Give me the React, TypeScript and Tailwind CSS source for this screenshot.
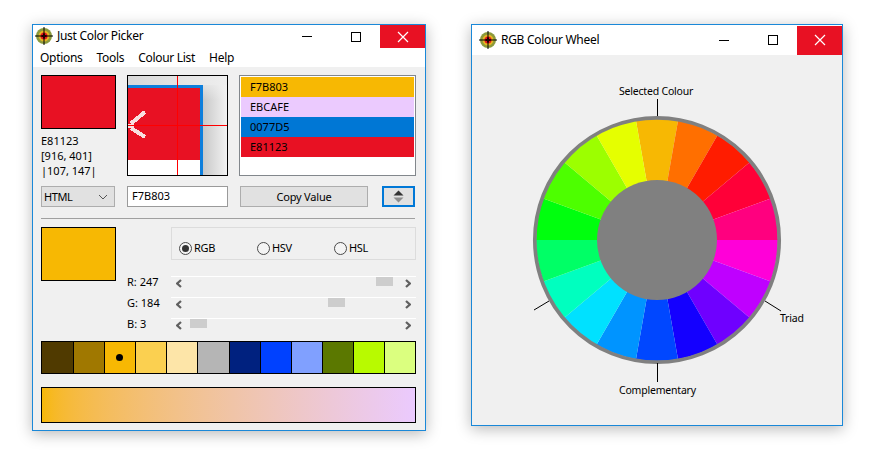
const swatches = ["#503A00", "#A07800", "#F7B803", "#FBD050", "#FDE5A8", "#B5B5B5", "#00217F", "#0041FF", "#80A0FF", "#5B7800", "#B8FA00", "#DBFF7F"];
const colourList = [
  { hex: "F7B803", bg: "bg-[#F7B803]" },
  { hex: "EBCAFE", bg: "bg-[#EBCAFE]" },
  { hex: "0077D5", bg: "bg-[#0077D5]" },
  { hex: "E81123", bg: "bg-[#E81123]" },
];
const sliders = [
  { label: "R: 247", thumb: 205 },
  { label: "G: 184", thumb: 157 },
  { label: "B: 3", thumb: 19 },
];
const wheel = ["#F7B803", "#FF6F00", "#FF1C00", "#FF0038", "#FF007F", "#FF00D8", "#BF00FF", "#6F00FF", "#1400FF", "#0047FF", "#0094FF", "#00E1FF", "#00FFBF", "#00FF66", "#00FF0E", "#4DFF00", "#9CFF00", "#E5FF00"];

function wedge(i: number) {
  const r = 121;
  const a = ((i * 20 - 10 - 90) * Math.PI) / 180;
  const b = ((i * 20 + 10 - 90) * Math.PI) / 180;
  return `M185 185L${185 + r * Math.cos(a)} ${185 + r * Math.sin(a)}A${r} ${r} 0 0 1 ${185 + r * Math.cos(b)} ${185 + r * Math.sin(b)}Z`;
}

function AppIcon() {
  return (
    <svg width="18" height="18" viewBox="0 0 18 18" className="shrink-0">
      <circle cx="9" cy="9" r="8" fill="#8B9A3C" />
      <circle cx="9" cy="9" r="5.5" fill="#E6B422" />
      <circle cx="9" cy="9" r="3.5" fill="#E4161E" />
      <path d="M0 9H18M9 0V18" stroke="#000" strokeWidth="1" />
      <path d="M6.5 9H11.5M9 6.5V11.5" stroke="#200" strokeWidth="2" />
    </svg>
  );
}

function WindowButtons({ height }: { height: string }) {
  return (
    <div className="flex items-center ml-auto">
      <span className="block w-[10px] h-px bg-black mr-[39px]" />
      <span className="block w-[10px] h-[10px] border border-black mr-[19px]" />
      <div className={`flex items-center justify-center w-[45px] bg-[#E81123] ${height}`}>
        <svg width="12" height="12" viewBox="0 0 12 12">
          <path d="M1 1L11 11M11 1L1 11" stroke="#fff" strokeWidth="1.2" />
        </svg>
      </div>
    </div>
  );
}

function ZoomView() {
  return (
    <svg width="99" height="99" viewBox="0 0 99 99" className="block">
      <defs>
        <linearGradient id="shade" x1="0" x2="1" y1="0" y2="0">
          <stop offset="0" stopColor="#C8C8C8" />
          <stop offset="1" stopColor="#F2F2F2" />
        </linearGradient>
        <linearGradient id="fade" x1="0" x2="0" y1="0" y2="1">
          <stop offset="0" stopColor="#F0F0F0" />
          <stop offset="1" stopColor="#F0F0F0" stopOpacity="0" />
        </linearGradient>
        <linearGradient id="strip" x1="0" x2="1" y1="0" y2="0">
          <stop offset="0" stopColor="#D8D8D8" />
          <stop offset="1" stopColor="#EEEEEE" />
        </linearGradient>
      </defs>
      <rect width="99" height="99" fill="#F0F0F0" />
      <rect x="75" width="24" height="99" fill="url(#shade)" />
      <rect x="75" width="24" height="24" fill="url(#fade)" />
      <rect width="99" height="9" fill="url(#strip)" />
      <rect y="9" width="75" height="90" fill="#0E7FDC" />
      <rect y="12" width="72" height="72" fill="#E81123" />
      <rect y="84" width="72" height="15" fill="#fff" />
      <path d="M17 36L3 47.5M3 52L17 61M0 49.5H6" stroke="#F8DFDF" strokeWidth="4" fill="none" shapeRendering="crispEdges" />
      <path d="M49.5 0V99M0 49.5H99" stroke="#FF0000" strokeWidth="1" />
    </svg>
  );
}

function Radio({ label, checked, width }: { label: string; checked?: boolean; width: string }) {
  return (
    <div className={`flex items-center gap-[2px] ${width}`}>
      <span className="flex items-center justify-center w-[13px] h-[13px] rounded-full border border-[#4a4a4a] bg-[#f4f4f4]">
        {checked && <span className="block w-[7px] h-[7px] rounded-full bg-[#333]" />}
      </span>
      <span className="tracking-[-0.3px]">{label}</span>
    </div>
  );
}

function Slider({ label, thumb }: { label: string; thumb: number }) {
  return (
    <div className="flex h-[21px]">
      <span className="w-[44px] h-[12px] leading-[12px]">{label}</span>
      <div className="relative flex justify-between items-start flex-1 border-t border-white pl-[5px] pr-[5px] pt-[1px]">
        <svg width="6" height="9" viewBox="0 0 6 9" className="mt-[1px]">
          <path d="M5 1L1.2 4.5L5 8" stroke="#606060" strokeWidth="2.2" fill="none" />
        </svg>
        <span className="absolute top-0 h-[9px] w-[17px] bg-[#CDCDCD]" style={{ left: thumb }} />
        <svg width="6" height="9" viewBox="0 0 6 9" className="mt-[1px]">
          <path d="M1 1L4.8 4.5L1 8" stroke="#606060" strokeWidth="2.2" fill="none" />
        </svg>
      </div>
    </div>
  );
}

function PickerWindow() {
  return (
    <div className="absolute left-[32px] top-[24px] w-[394px] h-[407px] flex flex-col border border-[#1A88D8] bg-[#F0F0F0] shadow-[0_3px_14px_rgba(0,0,0,0.28)]">
      <div className="flex items-center h-[23px] bg-white pl-[2px] tracking-[-0.3px]">
        <div className="flex items-center -mt-[2px]">
          <AppIcon />
          <span className="ml-[4px]">Just Color Picker</span>
        </div>
        <WindowButtons height="h-[23px]" />
      </div>
      <div className="flex items-center h-[19px] bg-white pl-[7px] gap-[14px] tracking-[-0.3px]">
        <span>Options</span>
        <span>Tools</span>
        <span>Colour List</span>
        <span>Help</span>
      </div>
      <div className="flex flex-col flex-1 pl-[8px] pt-[8px] text-[11px]">
        <div className="flex h-[101px]">
          <div className="w-[75px] mr-[11px]">
            <div className="h-[54px] border border-black bg-[#E81123]" />
            <div className="mt-[4px] leading-[15px]">
              <div>E81123</div>
              <div>[916, 401]</div>
              <div>|107, 147|</div>
            </div>
          </div>
          <div className="w-[101px] h-[101px] border border-black mr-[11px]">
            <ZoomView />
          </div>
          <div className="w-[177px] h-[101px] border border-[#82878C] bg-white p-px">
            {colourList.map((c) => (
              <div key={c.hex} className={`h-[20px] leading-[20px] pl-[9px] ${c.bg}`}>
                {c.hex}
              </div>
            ))}
          </div>
        </div>

        <div className="flex h-[21px] mt-[10px]">
          <div className="flex items-center justify-between w-[74px] mr-[12px] pl-[2px] pr-[3px] pt-[1px] border border-[#ADADAD] bg-[#E1E1E1]">
            <span className="tracking-[-0.4px]">HTML</span>
            <svg width="10" height="6" viewBox="0 0 10 6" className="mr-[3px]">
              <path d="M1 1L5 5L9 1" stroke="#555" strokeWidth="1" fill="none" />
            </svg>
          </div>
          <div className="flex items-center w-[101px] mr-[12px] pl-[4px] border border-[#9A9A9A] bg-white">F7B803</div>
          <div className="flex items-center justify-center w-[128px] mr-[14px] pt-[1px] border border-[#ADADAD] bg-[#E1E1E1] tracking-[-0.2px]">Copy Value</div>
          <div className="flex items-center justify-center w-[33px] border-2 border-[#0078D7] bg-[#E1E1E1]">
            <svg width="11" height="13" viewBox="0 0 11 13">
              <path d="M5.5 0.5L10.5 5.5H0.5Z" fill="#333" />
              <path d="M0.5 7.5H10.5L5.5 12.5Z" fill="#8C8C8C" />
            </svg>
          </div>
        </div>

        <div className="w-[374px] h-px bg-[#A0A0A0] mt-[11px]" />

        <div className="flex mt-[8px]">
          <div className="w-[75px] h-[54px] border border-black bg-[#F7B803] mr-[11px]" />
          <div className="w-[289px]">
            <div className="flex items-center h-[33px] ml-[44px] mb-[16px] pl-[7px] pt-[12px] pb-[2px] border border-[#DCDCDC]">
              <Radio label="RGB" checked width="w-[78px]" />
              <Radio label="HSV" width="w-[77px]" />
              <Radio label="HSL" width="w-[60px]" />
            </div>
            {sliders.map((s) => (
              <Slider key={s.label} label={s.label} thumb={s.thumb} />
            ))}
          </div>
        </div>

        <div className="grid grid-cols-12 w-[375px] h-[33px] mt-[2px] border border-black">
          {swatches.map((c, i) => (
            <div
              key={c}
              className={`flex items-center justify-center ${i > 0 ? "border-l border-black" : ""}`}
              style={{ backgroundColor: c }}
            >
              {i === 2 && <span className="block w-[7px] h-[7px] mr-[1px] rounded-full bg-black" />}
            </div>
          ))}
        </div>

        <div className="w-[375px] h-[36px] mt-[13px] border border-black bg-gradient-to-r from-[#F7B803] to-[#EBCAFE]" />
      </div>
    </div>
  );
}

function WheelWindow() {
  return (
    <div className="absolute left-[471px] top-[24px] w-[372px] h-[402px] flex flex-col border border-[#1A88D8] bg-[#F0F0F0] shadow-[0_3px_14px_rgba(0,0,0,0.28)]">
      <div className="flex items-center h-[30px] bg-white pl-[7px] tracking-[-0.3px]">
        <AppIcon />
        <span className="ml-[4px]">RGB Colour Wheel</span>
        <WindowButtons height="h-[29px] self-start" />
      </div>
      <div className="relative flex-1 text-[10.5px] tracking-[-0.2px]">
        <svg width="370" height="370" viewBox="0 0 370 370" className="block">
          {wheel.map((c, i) => (
            <path key={c} d={wedge(i)} fill={c} />
          ))}
          <circle cx="185" cy="185" r="122.2" fill="none" stroke="#808080" strokeWidth="3.7" />
          <circle cx="185" cy="185" r="60" fill="#808080" />
          <path d="M185.5 44V61M185.5 308V327M293 246L309 256M77 246L62 255" stroke="#000" strokeWidth="1" fill="none" />
        </svg>
        <span className="absolute left-[147px] top-[29px]">Selected Colour</span>
        <span className="absolute left-[147px] top-[328px]">Complementary</span>
        <span className="absolute left-[308px] top-[256px]">Triad</span>
      </div>
    </div>
  );
}

export default function App() {
  return (
    <div className="relative w-[874px] h-[456px] overflow-hidden bg-white text-[12px] text-black font-['Noto_Sans',sans-serif]">
      <PickerWindow />
      <WheelWindow />
    </div>
  );
}
